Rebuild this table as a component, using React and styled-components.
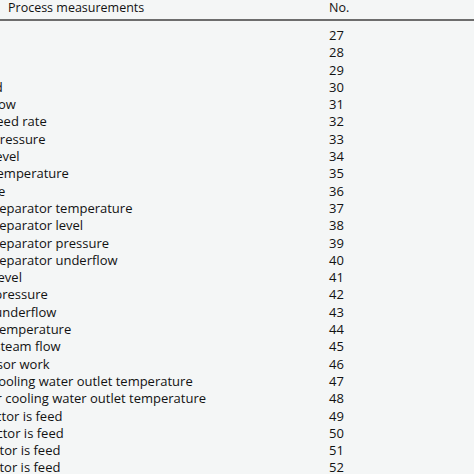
import styled, { createGlobalStyle } from "styled-components";

const GlobalStyle = createGlobalStyle`
  html, body {
    margin: 0;
    padding: 0;
    background: #f4f6f6;
    overflow: hidden;
  }
`;

// [no, label, extra shift to the left for labels cut further in the scan]
const rows = [
  [27, "A feed"],
  [28, "D feed"],
  [29, "E feed"],
  [30, "A and C feed", 16],
  [31, "Recycle flow"],
  [32, "Reactor feed rate"],
  [33, "Reactor pressure"],
  [34, "Reactor level"],
  [35, "Reactor temperature"],
  [36, "Purge rate"],
  [37, "Product separator temperature"],
  [38, "Product separator level"],
  [39, "Product separator pressure"],
  [40, "Product separator underflow"],
  [41, "Stripper level"],
  [42, "Stripper pressure"],
  [43, "Stripper underflow"],
  [44, "Stripper temperature"],
  [45, "Stripper steam flow"],
  [46, "Compressor work"],
  [47, "Reactor cooling water outlet temperature"],
  [48, "Separator cooling water outlet temperature"],
  [49, "A to reactor is feed", -6],
  [50, "D to reactor is feed", -6],
  [51, "E to reactor is feed", -5],
  [52, "C to reactor is feed", -4],
];

const Table = styled.div`
  width: 474px;
  font-family: "Open Sans", "Liberation Sans", sans-serif;
  color: #121212;
`;

const HeadRow = styled.div`
  display: grid;
  grid-template-columns: 321px 1fr;
  padding-left: 8px;
  height: 19px;
  font-size: 12.5px;
  line-height: 15px;
  border-bottom: 2px solid #6d6d6d;
`;

const Body = styled.div`
  padding-top: 6px;
`;

const Row = styled.div`
  display: grid;
  grid-template-columns: 321px 1fr;
  padding-left: 8px;
  height: 17.3px;
  font-size: 13px;
  line-height: 17.3px;
`;

const Label = styled.div`
  white-space: nowrap;
  margin-left: ${(p) => -66 - (p.$shift || 0)}px;
`;

const Num = styled.div`
  white-space: nowrap;
`;

export default function App() {
  return (
    <>
      <GlobalStyle />
      <Table>
        <HeadRow>
          <div>Process measurements</div>
          <Num>No.</Num>
        </HeadRow>
        <Body>
          {rows.map(([n, label, shift]) => (
            <Row key={n}>
              <Label $shift={shift}>{label}</Label>
              <Num>{n}</Num>
            </Row>
          ))}
        </Body>
      </Table>
    </>
  );
}
